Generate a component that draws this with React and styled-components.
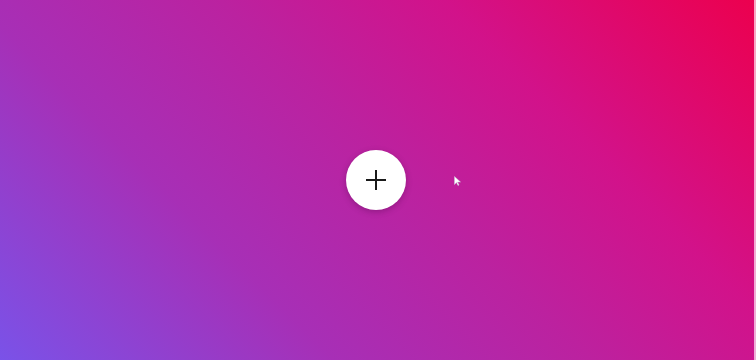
import styled, { createGlobalStyle } from "styled-components";

const GlobalStyle = createGlobalStyle`
	html, body, #root {
		margin: 0;
		padding: 0;
		height: 100%;
	}
	body {
		font-family: Roboto, "Liberation Sans", sans-serif;
		overflow: hidden;
	}
`;

const App = () => {
	return (
		<>
			<GlobalStyle />
			<Page>
				<Stage>
					<AddButton aria-label="Add">
						<svg width="22" height="22" viewBox="0 0 22 22">
							<path d="M11 1v20M1 11h20" stroke="#1a1a1a" strokeWidth="2" />
						</svg>
					</AddButton>
					<Cursor width="7" height="10" viewBox="0 0 7 10">
						<path d="M0.5 0.5v8l2-2 1.5 3 1-0.5-1.5-3h3z" fill="#fff" stroke="#c8c8d8" strokeWidth="0.5" />
					</Cursor>
				</Stage>
				<Edge />
			</Page>
		</>
	);
};

export default App;

const Page = styled.div`
	display: flex;
	width: 100%;
	height: 100%;
	background: linear-gradient(45deg, #7a52e8 0%, #a72fb6 30%, #bb22a0 52%, #d2128a 72%, #ec004e 100%);
`;

const Stage = styled.main`
	flex: 1;
	position: relative;
	display: flex;
	align-items: center;
	justify-content: center;
	padding-right: 2px;
`;

const AddButton = styled.button`
	width: 60px;
	height: 60px;
	border-radius: 50%;
	border: none;
	background: #fff;
	display: flex;
	align-items: center;
	justify-content: center;
	box-shadow: 0 2px 6px rgba(60, 0, 60, 0.3);
	cursor: pointer;
	padding: 0;
`;

const Cursor = styled.svg`
	position: absolute;
	left: 454px;
	top: 176px;
`;

const Edge = styled.div`
	width: 2px;
	background: rgba(255, 255, 255, 0.65);
`;
